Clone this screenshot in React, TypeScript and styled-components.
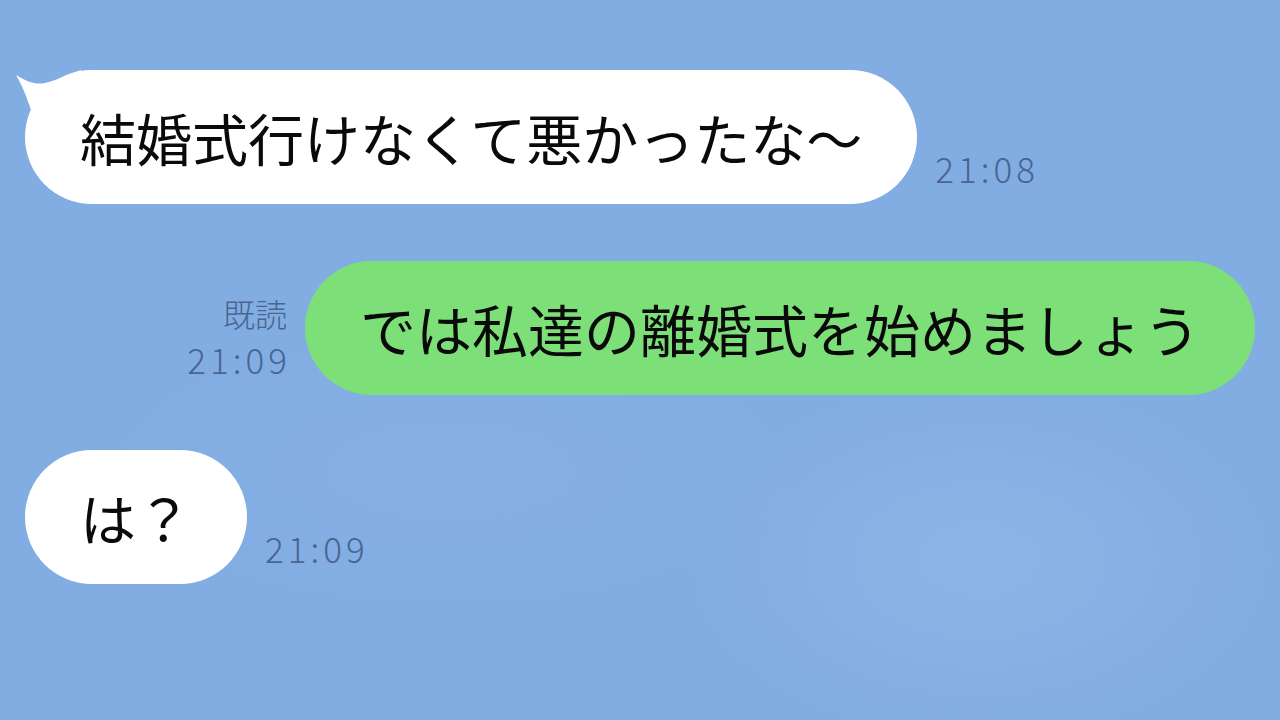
import * as React from "react";
import styled, { createGlobalStyle } from "styled-components";

const GlobalStyle = createGlobalStyle`
  html, body {
    margin: 0;
    padding: 0;
  }
  body {
    width: 1280px;
    height: 720px;
    overflow: hidden;
    font-family: "Noto Sans CJK JP", "Noto Sans", sans-serif;
  }
`;

const Screen = styled.main`
  width: 1280px;
  height: 720px;
  box-sizing: border-box;
  padding: 70px 25px 0 25px;
  display: flex;
  flex-direction: column;
  background: radial-gradient(
      ellipse 420px 260px at 980px 560px,
      rgba(150, 186, 232, 0.55),
      rgba(150, 186, 232, 0) 70%
    ),
    radial-gradient(
      ellipse 500px 200px at 450px 470px,
      rgba(140, 180, 230, 0.4),
      rgba(140, 180, 230, 0) 70%
    ),
    #82ade3;
`;

const Row = styled.div<{ $mine?: boolean; $gap: number }>`
  display: flex;
  align-items: flex-end;
  justify-content: ${(p) => (p.$mine ? "flex-end" : "flex-start")};
  gap: 18px;
  margin-top: ${(p) => p.$gap}px;
`;

const Bubble = styled.div<{ $mine?: boolean }>`
  position: relative;
  height: 134px;
  padding: 0 55px;
  display: flex;
  align-items: center;
  border-radius: 67px;
  background: ${(p) => (p.$mine ? "#7ddf78" : "#ffffff")};
  color: #0a0a0a;
  font-size: 56px;
  line-height: 1;
  white-space: nowrap;
`;

// little speech tail on the first incoming bubble
const Tail = styled.svg`
  position: absolute;
  left: -12px;
  top: -2px;
  width: 72px;
  height: 52px;
`;

const Meta = styled.div`
  display: flex;
  flex-direction: column;
  align-items: flex-end;
  margin-bottom: 19px;
  color: #4a6590;
  font-family: "Noto Sans CJK JP", "Noto Sans", sans-serif;
  font-weight: 300;
  line-height: 1;
`;

const Read = styled.span`
  font-size: 32px;
  margin-bottom: 12px;
`;

const Time = styled.span`
  font-size: 35px;
  letter-spacing: 4px;
  margin-right: -4px;
`;

export default function App() {
  return (
    <>
      <GlobalStyle />
      <Screen>
        <Row $gap={0}>
          <Bubble>
            <Tail viewBox="-12 -2 72 52">
              <path
                d="M-9 5 C 3 12, 10 15, 20 13 C 32 10, 42 5, 56 0 L 56 48 L 6 48 L 6 40 C 2 28, -3 15, -9 5 Z"
                fill="#ffffff"
              />
            </Tail>
            結婚式行けなくて悪かったな〜
          </Bubble>
          <Meta>
            <Time>21:08</Time>
          </Meta>
        </Row>
        <Row $mine $gap={57}>
          <Meta>
            <Read>既読</Read>
            <Time>21:09</Time>
          </Meta>
          <Bubble $mine>では私達の離婚式を始めましょう</Bubble>
        </Row>
        <Row $gap={55}>
          <Bubble>は？</Bubble>
          <Meta>
            <Time>21:09</Time>
          </Meta>
        </Row>
      </Screen>
    </>
  );
}
